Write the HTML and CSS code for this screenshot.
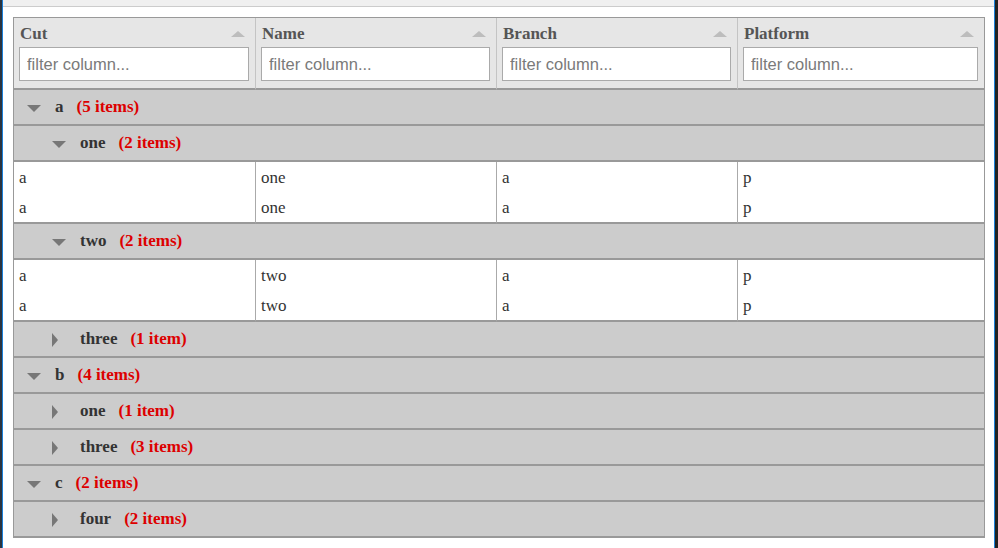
FILE: index.html
```html
<!DOCTYPE html>
<html>
<head>
<meta charset="utf-8">
<link rel="stylesheet" href="styles.css">
</head>
<body>
<div class="edge-left"></div>
<div class="window">
  <div class="titlebar"></div>
  <div class="content">
    <table class="grid">
      <colgroup>
        <col class="c1"><col class="c2"><col class="c3"><col class="c4">
      </colgroup>
      <thead>
        <tr>
          <th><div class="th-label"><span>Cut</span><i class="sort"></i></div><input class="filter" placeholder="filter column..."></th>
          <th class="sep"><div class="th-label"><span>Name</span><i class="sort"></i></div><input class="filter" placeholder="filter column..."></th>
          <th class="sep"><div class="th-label"><span>Branch</span><i class="sort"></i></div><input class="filter" placeholder="filter column..."></th>
          <th class="sep"><div class="th-label"><span>Platform</span><i class="sort"></i></div><input class="filter" placeholder="filter column..."></th>
        </tr>
      </thead>
      <tbody>
        <tr class="group"><td colspan="4"><div class="g l1"><i class="arrow down"></i><span class="g-name">a</span><span class="g-count">(5 items)</span></div></td></tr>
        <tr class="group"><td colspan="4"><div class="g l2"><i class="arrow down"></i><span class="g-name">one</span><span class="g-count">(2 items)</span></div></td></tr>
        <tr class="row"><td><div class="cell">a</div></td><td class="sep"><div class="cell">one</div></td><td class="sep"><div class="cell">a</div></td><td class="sep"><div class="cell">p</div></td></tr>
        <tr class="row last"><td><div class="cell">a</div></td><td class="sep"><div class="cell">one</div></td><td class="sep"><div class="cell">a</div></td><td class="sep"><div class="cell">p</div></td></tr>
        <tr class="group"><td colspan="4"><div class="g l2"><i class="arrow down"></i><span class="g-name">two</span><span class="g-count">(2 items)</span></div></td></tr>
        <tr class="row"><td><div class="cell">a</div></td><td class="sep"><div class="cell">two</div></td><td class="sep"><div class="cell">a</div></td><td class="sep"><div class="cell">p</div></td></tr>
        <tr class="row last"><td><div class="cell">a</div></td><td class="sep"><div class="cell">two</div></td><td class="sep"><div class="cell">a</div></td><td class="sep"><div class="cell">p</div></td></tr>
        <tr class="group"><td colspan="4"><div class="g l2"><i class="arrow right"></i><span class="g-name">three</span><span class="g-count">(1 item)</span></div></td></tr>
        <tr class="group"><td colspan="4"><div class="g l1"><i class="arrow down"></i><span class="g-name">b</span><span class="g-count">(4 items)</span></div></td></tr>
        <tr class="group"><td colspan="4"><div class="g l2"><i class="arrow right"></i><span class="g-name">one</span><span class="g-count">(1 item)</span></div></td></tr>
        <tr class="group"><td colspan="4"><div class="g l2"><i class="arrow right"></i><span class="g-name">three</span><span class="g-count">(3 items)</span></div></td></tr>
        <tr class="group"><td colspan="4"><div class="g l1"><i class="arrow down"></i><span class="g-name">c</span><span class="g-count">(2 items)</span></div></td></tr>
        <tr class="group"><td colspan="4"><div class="g l2"><i class="arrow right"></i><span class="g-name">four</span><span class="g-count">(2 items)</span></div></td></tr>
      </tbody>
    </table>
  </div>
</div>
<div class="edge-right"></div>
</body>
</html>
```
FILE: styles.css
```css
html, body {
  margin: 0;
  padding: 0;
  height: 548px;
  overflow: hidden;
  background: #ffffff;
}
body {
  display: flex;
  font-family: "Liberation Serif", "Times New Roman", serif;
}
.edge-left {
  width: 2px;
  background: #2a3440;
  border-right: 1px solid #1b7fd8;
}
.edge-right {
  width: 3px;
  background: #222222;
  border-left: 1px solid #1b7fd8;
}
.window {
  flex: 1;
  display: flex;
  flex-direction: column;
  background: #ffffff;
}
.titlebar {
  height: 6px;
  background: #f0f0f0;
  border-bottom: 1px solid #cccccc;
}
.content {
  padding: 10px 0 0 10px;
}
.grid {
  width: 972px;
  table-layout: fixed;
  border-collapse: separate;
  border-spacing: 0;
  border: 1px solid #999999;
  border-bottom: 0;
  font-size: 17px;
}
.c1 { width: 241px; }
.c2 { width: 241px; }
.c3 { width: 241px; }
.c4 { width: 247px; }

th {
  background: #e6e6e6;
  padding: 6px 6px 7px 5px;
  vertical-align: top;
  text-align: left;
  border-bottom: 2px solid #999999;
}
th.sep { border-left: 1px solid #c4c4c4; }
.th-label {
  height: 20px;
  line-height: 20px;
  margin-bottom: 3px;
  padding-left: 1px;
  display: flex;
  justify-content: space-between;
  align-items: center;
  font-weight: bold;
  color: #555555;
}
.sort {
  width: 0;
  height: 0;
  margin-right: 4px;
  border-left: 7px solid transparent;
  border-right: 7px solid transparent;
  border-bottom: 6px solid #bdbdbd;
}
.filter {
  display: block;
  box-sizing: border-box;
  width: 100%;
  height: 34px;
  margin: 0;
  padding: 0 7px;
  border: 1px solid #aaaaaa;
  border-radius: 0;
  background: #ffffff;
  font-family: "Liberation Sans", Arial, sans-serif;
  font-size: 16.5px;
  color: #555555;
  outline: none;
}
.filter::placeholder { color: #7a7a7a; opacity: 1; }

.group td {
  padding: 0;
  background: #cccccc;
  border-bottom: 2px solid #999999;
}
.g {
  height: 34px;
  display: flex;
  align-items: center;
  font-weight: bold;
  color: #333333;
}
.g.l1 { padding-left: 13px; }
.g.l2 { padding-left: 38px; }
.arrow {
  width: 14px;
  height: 14px;
  margin-right: 14px;
  display: flex;
  align-items: center;
  justify-content: flex-start;
  position: relative;
}
.arrow::before {
  content: "";
  width: 0;
  height: 0;
}
.arrow.down::before {
  border-left: 7px solid transparent;
  border-right: 7px solid transparent;
  border-top: 7px solid #777777;
  margin-top: 2px;
}
.arrow.right::before {
  border-top: 7px solid transparent;
  border-bottom: 7px solid transparent;
  border-left: 6px solid #777777;
  margin-top: 2px;
}
.g-count {
  margin-left: 13px;
  color: #dd0000;
}

.row td {
  padding: 0 5px;
  background: #ffffff;
  color: #333333;
}
.row td.sep { border-left: 1px solid #aaaaaa; }
.cell {
  height: 31px;
  line-height: 31px;
}
.row.last td { border-bottom: 2px solid #999999; }
.row.last .cell { height: 29px; line-height: 29px; }
```
